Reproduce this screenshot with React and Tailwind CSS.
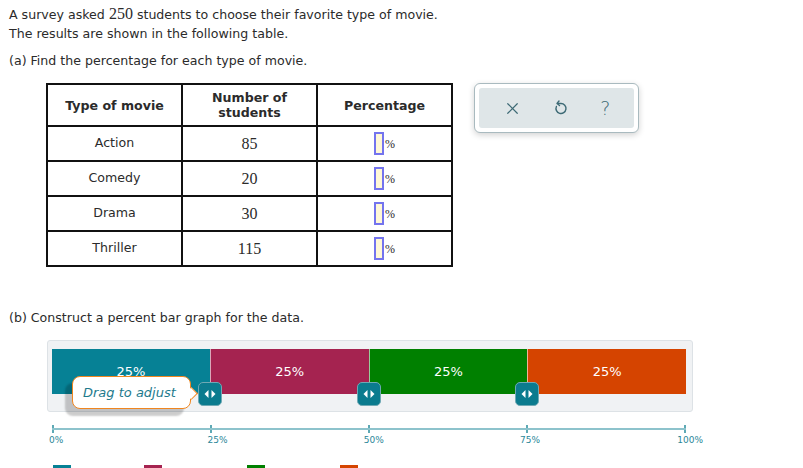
import { X } from 'lucide-react'

const rows = [
  { type: 'Action', n: 85 },
  { type: 'Comedy', n: 20 },
  { type: 'Drama', n: 30 },
  { type: 'Thriller', n: 115 },
]

const segments = [
  { color: 'bg-[#068195]', label: '25%' },
  { color: 'bg-[#a52350]', label: '25%' },
  { color: 'bg-[#008000]', label: '25%' },
  { color: 'bg-[#d54400]', label: '25%' },
]

const ticks = ['0%', '25%', '50%', '75%', '100%']

function Handle({ left }) {
  return (
    <div className={`absolute top-[33px] ${left} w-[24px] h-[24px] rounded-[5px] bg-[#0b7b8e] border border-[#6fa9b4] flex items-center justify-center`}>
      <svg width="14" height="10" viewBox="0 0 14 10">
        <polygon points="5.5,1 5.5,9 1.5,5" fill="white" />
        <polygon points="8.5,1 8.5,9 12.5,5" fill="white" />
      </svg>
    </div>
  )
}

function UndoIcon() {
  return (
    <svg width="16" height="18" viewBox="0 0 16 18" fill="none" stroke="#3d6a75" strokeWidth="1.4" strokeLinecap="round" strokeLinejoin="round">
      <path d="M5.5 4.5 H8 a5 5 0 1 1 -4.6 3" />
      <path d="M6 2 L4 4.5 L6.5 6.5" />
    </svg>
  )
}

export default function App() {
  return (
    <div className="w-[803px] h-[468px] overflow-hidden bg-white text-[#2b2b2b] font-['DejaVu_Sans',Verdana,sans-serif] text-[12.6px] px-[9px] pt-[4px]">
      <p className="leading-[19px]">
        A survey asked <span className="font-['Liberation_Serif',serif] text-[16px]">250</span> students to choose their favorite type of movie.
      </p>
      <p className="leading-[19px]">The results are shown in the following table.</p>
      <p className="leading-[19px] mt-[8px]">(a) Find the percentage for each type of movie.</p>

      <div className="flex items-start mt-[13px] ml-[37px]">
        <table className="border-collapse w-[406px] table-fixed">
          <thead>
            <tr className="h-[42px]">
              <th className="border-2 border-[#111] w-[135px] font-bold leading-[15px]">Type of movie</th>
              <th className="border-2 border-[#111] w-[135px] font-bold leading-[15px]">Number of<br />students</th>
              <th className="border-2 border-[#111] w-[135px] font-bold leading-[15px]">Percentage</th>
            </tr>
          </thead>
          <tbody>
            {rows.map(r => (
              <tr key={r.type} className="h-[35px]">
                <td className="border-2 border-[#111] text-center">{r.type}</td>
                <td className="border-2 border-[#111] text-center font-['Liberation_Serif',serif] text-[16px]">{r.n}</td>
                <td className="border-2 border-[#111]">
                  <div className="flex items-start justify-center">
                    <span className="block w-[10px] h-[23px] border-2 border-[#7474ee] bg-[#fff8d6]" />
                    <span className="font-['Liberation_Serif',serif] text-[12px] leading-[12px] mt-[6px] ml-[1px]">%</span>
                  </div>
                </td>
              </tr>
            ))}
          </tbody>
        </table>

        <div className="ml-[21px] w-[165px] h-[50px] rounded-[6px] border border-[#a9babf] bg-white p-[4px] shadow-[0_2px_6px_rgba(0,0,0,0.18)]">
          <div className="h-full rounded-[3px] bg-[#dfe6e8] flex items-center justify-around px-[8px] text-[#3d6a75]">
            <X size={19} strokeWidth={1.5} />
            <UndoIcon />
            <span className="font-['DejaVu_Sans',sans-serif] text-[19px] font-light leading-none">?</span>
          </div>
        </div>
      </div>

      <p className="leading-[19px] mt-[41px]">(b) Construct a percent bar graph for the data.</p>

      <div className="mt-[13px] ml-[38px] w-[646px] h-[72px] rounded-[3px] border border-[#dde2e6] bg-[#f0f2f4] pl-[4px] pr-[6px] pt-[8px]">
        <div className="relative">
          <div className="flex h-[45px] text-white text-[13px]">
            {segments.map((s, i) => (
              <div key={i} className={`flex-1 flex items-center justify-center ${s.color} ${i > 0 ? 'border-l border-white/60' : ''}`}>
                {s.label}
              </div>
            ))}
          </div>

          <div className="absolute left-[20px] top-[27px] w-[119px] h-[33px] rounded-[8px] border-[1.5px] border-[#f0861f] bg-white shadow-[-7px_7px_2px_rgba(0,0,0,0.2)] flex items-center pl-[10px]">
            <span className="italic text-[#1d7a8c] text-[13px]">Drag to adjust</span>
            <span className="absolute right-[-5.5px] top-[12px] w-[9px] h-[9px] rotate-45 bg-white border-t-[1.5px] border-r-[1.5px] border-[#f0861f]" />
          </div>

          <Handle left="left-[146px]" />
          <Handle left="left-[305px]" />
          <Handle left="left-[463px]" />
        </div>
      </div>

      <div className="ml-[43px] w-[634px] mt-[13px]">
        <div className="relative h-[8px]">
          <div className="absolute left-0 right-0 top-[3px] h-[2px] bg-[#8dc3cc]" />
          <div className="flex justify-between h-full">
            {ticks.map(t => (
              <div key={t} className="w-[2px] h-[8px] bg-[#5ea9b5]" />
            ))}
          </div>
        </div>
        <div className="flex justify-between mt-[1px] text-[9px] text-[#2b8799] leading-[12px]">
          {ticks.map((t, i) => (
            <span key={t} className={i === 0 ? 'ml-[-3px]' : i === 4 ? 'mr-[-17px]' : 'ml-[-1px] mr-[-8px]'}>{t}</span>
          ))}
        </div>
      </div>

      <div className="flex ml-[44px] mt-[19px]">
        <span className="w-[18px] h-[10px] bg-[#068195]" />
        <span className="w-[18px] h-[10px] bg-[#a52350] ml-[73px]" />
        <span className="w-[18px] h-[10px] bg-[#008000] ml-[85px]" />
        <span className="w-[18px] h-[10px] bg-[#d54400] ml-[75px]" />
      </div>
    </div>
  )
}
